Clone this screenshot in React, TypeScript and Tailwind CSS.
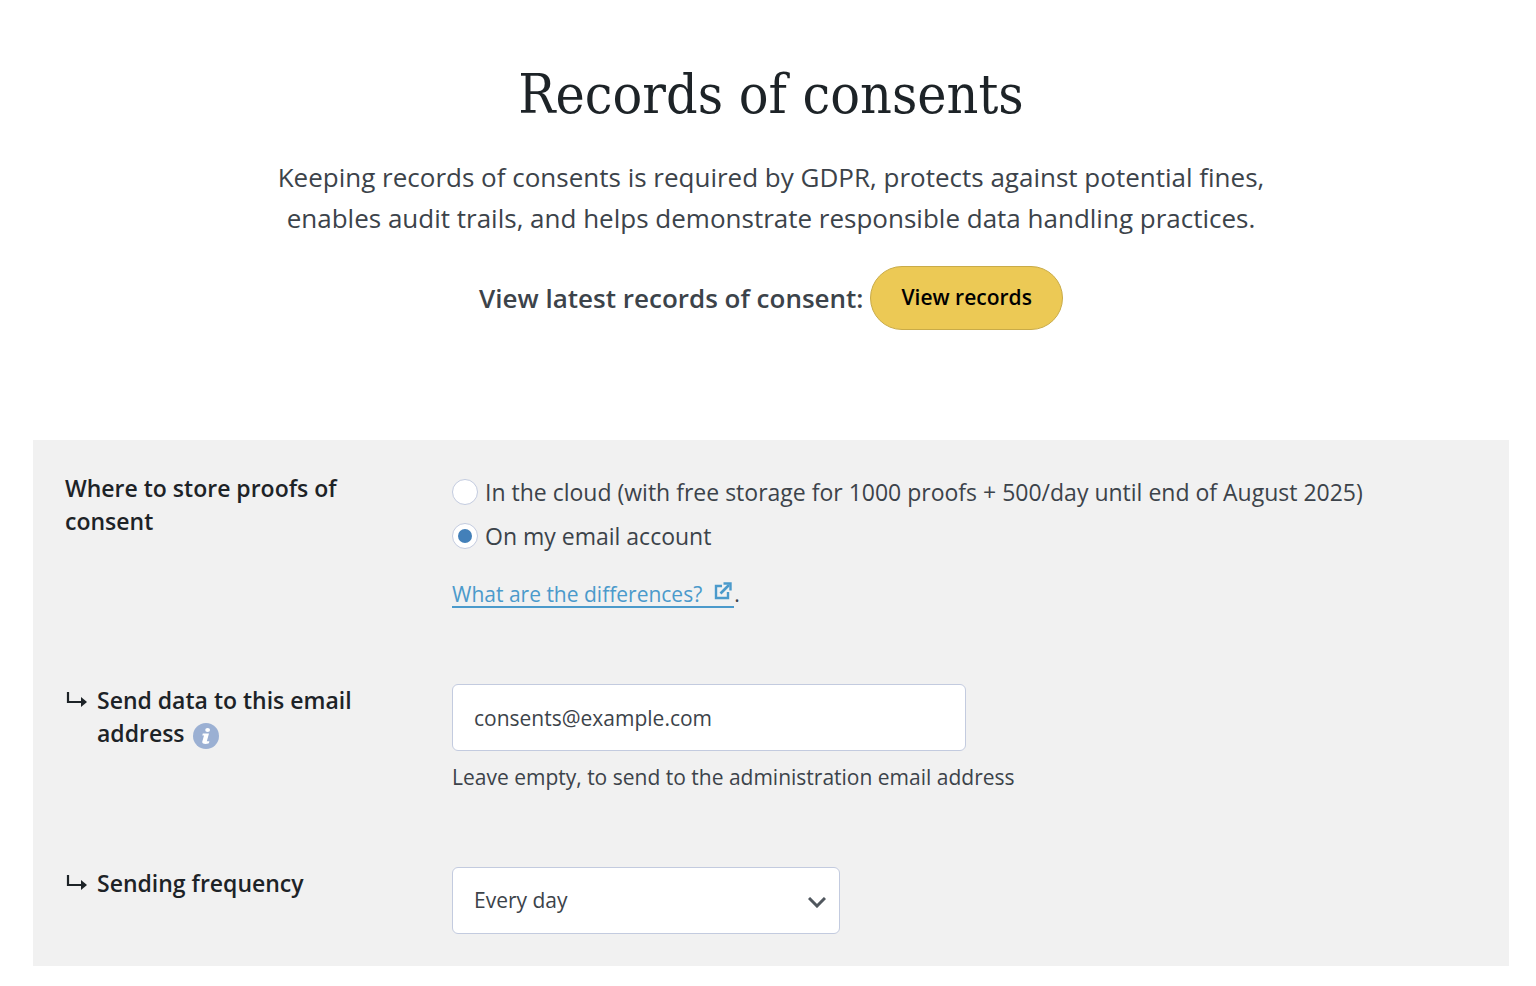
import type { ReactNode } from 'react';
import { useState } from 'react';

interface SettingRowProps {
  label: ReactNode;
  nested?: boolean;
  children: ReactNode;
}

const NestedArrow = () => (
  <svg viewBox="0 0 22 18" className="h-[18px] w-[22px] shrink-0" aria-hidden="true">
    <path d="M3 1v10h14" fill="none" stroke="currentColor" strokeWidth="2.200" />
    <path d="M16 6l6 5-6 5z" fill="currentColor" />
  </svg>
);

const ExternalIcon = () => (
  <svg viewBox="0 0 18 18" className="size-[18px]" fill="none" stroke="currentColor" aria-hidden="true">
    <path d="M8 4H2v12h12v-6" strokeWidth="2.400" />
    <path d="M6.500 11.500L15 3" strokeWidth="2.600" />
    <path d="M9.500 1.500h7v7" strokeWidth="2.400" />
  </svg>
);

const InfoIcon = () => (
  <svg viewBox="0 0 26 26" className="ml-2 inline-block size-[26px] align-middle" role="img" aria-label="More information">
    <circle cx="13" cy="13" r="13" fill="#9bb0d3" />
    <ellipse cx="14.6" cy="7" rx="2.4" ry="1.9" fill="#fff" />
    <path d="M9.800 10.500h6.200l-2.200 7.700h2.600l-.5 2c-2 .8-4.400.9-5.800.3-.8-.4-1-1.100-.8-1.900l1.700-6.100H9.300z" fill="#fff" />
  </svg>
);

const SettingRow = ({ label, nested, children }: SettingRowProps) => (
  <div className="grid grid-cols-[320px_1fr] gap-x-[67px]">
    <div className="flex gap-[10px] font-semibold leading-[33px] text-[#1d2327]">
      {nested && (
        <span className="flex h-8 items-center">
          <NestedArrow />
        </span>
      )}
      <div>{label}</div>
    </div>
    <div className="min-w-0">{children}</div>
  </div>
);

const storageOptions = [
  { value: 'cloud', label: 'In the cloud (with free storage for 1000 proofs + 500/day until end of August 2025)' },
  { value: 'email', label: 'On my email account' },
];

export default function App() {
  const [storage, setStorage] = useState('email');
  const [email, setEmail] = useState('consents@example.com');
  const [frequency, setFrequency] = useState('day');

  return (
    <main className="pt-14 pr-[27px] pb-5 pl-[33px] font-['Open_Sans','Noto_Sans',sans-serif] text-[23px] text-[#3c434a]">
      <header className="mx-auto mb-[110px] max-w-[1060px] text-center">
        <h1 className="font-['DejaVu_Serif_Condensed','DejaVu_Serif',serif] text-[55px] leading-[77px] text-[#1d2327]">Records of consents</h1>
        <p className="mt-6 text-[26px] leading-[41px]">
          Keeping records of consents is required by GDPR, protects against potential fines, enables audit trails, and helps demonstrate responsible data handling practices.
        </p>
        <div className="mt-[27px] flex items-center justify-center gap-[7px]">
          <span className="text-[26px] font-semibold">View latest records of consent:</span>
          <button type="button" className="h-16 rounded-full border border-[#c9ab48] bg-[#ecc955] px-[30px] text-[21px] font-semibold text-black">
            View records
          </button>
        </div>
      </header>

      <section className="flex flex-col gap-[74px] bg-[#f1f1f1] p-8">
        <SettingRow label="Where to store proofs of consent">
          <div role="radiogroup" aria-label="Where to store proofs of consent" className="pt-1">
            {storageOptions.map((option) => (
              <label key={option.value} className="flex h-11 items-start gap-[7px] leading-[33px]">
                <input
                  type="radio"
                  name="storage"
                  value={option.value}
                  checked={storage === option.value}
                  onChange={() => setStorage(option.value)}
                  className="mt-[3px] grid size-[26px] shrink-0 appearance-none place-items-center rounded-full border border-[#c3cbdf] bg-white before:size-[14px] before:rounded-full checked:before:bg-[#4380b9]"
                />
                {option.label}
              </label>
            ))}
          </div>
          <p className="mt-[14px] text-[21px] leading-8">
            <a href="#differences" className="inline-flex items-start gap-3 border-b-2 border-[#4b9acb] pr-[2px] leading-6 text-[#4b9acb]">
              What are the differences?
              <ExternalIcon />
            </a>
            .
          </p>
        </SettingRow>

        <SettingRow
          nested
          label={
            <>
              <label htmlFor="email">Send data to this email address</label>
              <InfoIcon />
            </>
          }
        >
          <input
            id="email"
            type="email"
            value={email}
            onChange={(e) => setEmail(e.target.value)}
            className="block h-[67px] w-full max-w-[514px] rounded-md border border-[#c3cbdf] bg-white px-[21px] text-[21px] text-[#3c434a]"
          />
          <p className="mt-[10px] text-[21px] leading-8">Leave empty, to send to the administration email address</p>
        </SettingRow>

        <SettingRow nested label={<label htmlFor="frequency">Sending frequency</label>}>
          <div className="relative max-w-[388px]">
            <select
              id="frequency"
              value={frequency}
              onChange={(e) => setFrequency(e.target.value)}
              className="block h-[67px] w-full appearance-none rounded-md border border-[#c3cbdf] bg-white px-[21px] text-[21px] text-[#3c434a]"
            >
              <option value="day">Every day</option>
              <option value="week">Every week</option>
              <option value="month">Every month</option>
            </select>
            <svg viewBox="0 0 18 11" className="pointer-events-none absolute top-[30px] right-[14px] h-[11px] w-[18px]" fill="none" stroke="#50575e" strokeWidth="3" aria-hidden="true">
              <path d="M1 1l8 8 8-8" />
            </svg>
          </div>
        </SettingRow>
      </section>
    </main>
  );
}
